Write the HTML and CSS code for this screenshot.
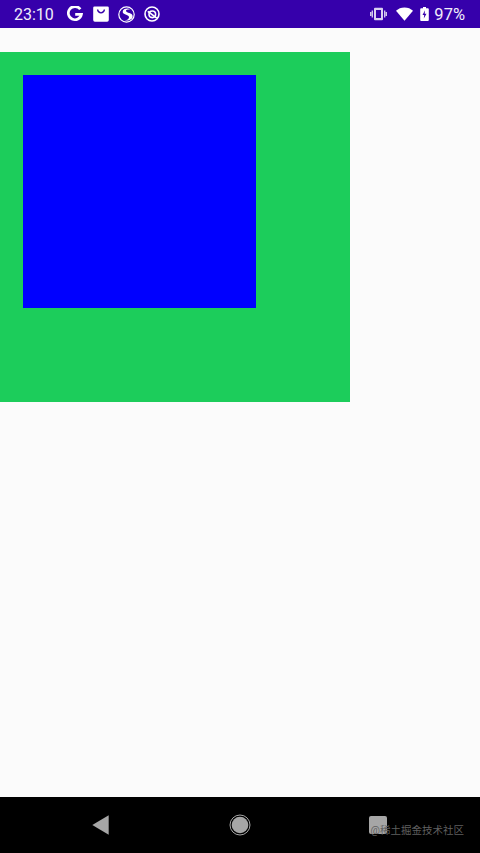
FILE: index.html
```html
<!DOCTYPE html>
<html lang="zh">
<head>
<meta charset="utf-8">
<title>Demo</title>
<link rel="stylesheet" href="styles.css">
</head>
<body>
<div class="screen">
  <header class="status">
    <div class="status-left">
      <span class="time">23:10</span>
      <div class="notifs">
        <svg class="ic ic-g" viewBox="0 0 16 16"><path d="M13.300 3.300A6.600 6.600 0 1 0 14.400 8.400H8.200" fill="none" stroke="#fff" stroke-width="2.700"/></svg>
        <svg class="ic" viewBox="0 0 16 16"><path d="M1.500 .500h13a1.300 1.300 0 0 1 1.300 1.300v12.200a1.700 1.700 0 0 1-1.700 1.700H1.900A1.700 1.700 0 0 1 .2 14V1.800A1.300 1.300 0 0 1 1.500 .500z" fill="#fff"/><path d="M4.500 3.500c.5 2.300 1.800 3.300 3.500 3.300s3-1 3.500-3.300" fill="none" stroke="#3600ab" stroke-width="1.200"/></svg>
        <svg class="ic ic-s" viewBox="0 0 17 17"><circle cx="8.500" cy="8.500" r="7.700" fill="none" stroke="#fff" stroke-width="1.200"/><path d="M12.500 3.200C9 1.800 4.800 3 4.700 5.800c-.1 3.200 5.700 2.600 6.300 5.100.3 1.500-1.300 3-4.500 3.500 4.300.8 8.300-.8 8.100-4.300-.2-3.500-6.200-2.800-6.500-5C7.500 3.900 10 3.200 12.500 3.200z" fill="#fff"/></svg>
        <svg class="ic" viewBox="0 0 16 16"><circle cx="8" cy="8" r="7" fill="none" stroke="#fff" stroke-width="1.600"/><circle cx="8.300" cy="8.300" r="3.300" fill="none" stroke="#fff" stroke-width="1.600"/><path d="M3.800 5.300l9 6.900" stroke="#fff" stroke-width="1.700"/></svg>
      </div>
    </div>
    <div class="status-right">
      <svg class="ic-vib" viewBox="0 0 17 14"><path d="M5 .800h7a1 1 0 0 1 1 1v10.400a1 1 0 0 1-1 1H5a1 1 0 0 1-1-1V1.800a1 1 0 0 1 1-1zM6 3v8h5V3z" fill="#d9d0f0" fill-rule="evenodd"/><path d="M2.300 3.500v7M.7 5v4M14.700 3.500v7M16.300 5v4" stroke="#d9d0f0" stroke-width="1.300"/></svg>
      <svg class="ic-wifi" viewBox="0 0 17 14"><path d="M0 3.700C2.200 1.600 5.200.4 8.500.4s6.300 1.200 8.500 3.300L8.500 13.800z" fill="#fff"/></svg>
      <svg class="ic-batt" viewBox="0 0 9 14"><path d="M3 0h3v1.200h1.800a1 1 0 0 1 1 1V13a1 1 0 0 1-1 1H1.200a1 1 0 0 1-1-1V2.200a1 1 0 0 1 1-1H3z" fill="#fff"/><path d="M5 3.300L2.500 8h1.700L3.800 11.500l2.700-4.700H4.700z" fill="#3600ab"/></svg>
      <span class="pct">97%</span>
    </div>
  </header>
  <main class="content">
    <div class="green">
      <div class="blue"></div>
    </div>
  </main>
  <footer class="nav">
    <svg class="nav-back" viewBox="0 0 17 20"><path d="M16.700 .300V19.700L.300 10z" fill="#a6a6a6"/></svg>
    <svg class="nav-home" viewBox="0 0 22 22"><circle cx="11" cy="11" r="10" fill="none" stroke="#a6a6a6" stroke-width="1"/><circle cx="11" cy="11" r="8.300" fill="#a6a6a6"/></svg>
    <span class="nav-recent"></span>
    <span class="watermark">@稀土掘金技术社区</span>
  </footer>
</div>
</body>
</html>
```
FILE: styles.css
```css
html, body {
  margin: 0;
  padding: 0;
}

.screen {
  width: 480px;
  height: 853px;
  display: flex;
  flex-direction: column;
  background: #fbfbfb;
  overflow: hidden;
  font-family: Roboto, "Noto Sans CJK SC", sans-serif;
}

.status {
  height: 28px;
  flex: none;
  box-sizing: border-box;
  padding: 0 15px 0 14px;
  display: flex;
  justify-content: space-between;
  align-items: center;
  background: #3600ab;
  color: #f1edfa;
  font-size: 16px;
}

.status-left,
.status-right,
.notifs {
  display: flex;
  align-items: center;
}

.notifs {
  gap: 9px;
  margin-left: 13px;
}

.ic {
  width: 16px;
  height: 16px;
  display: block;
}

.ic-g {
  margin-right: 1px;
}

.ic-s {
  width: 17px;
  height: 17px;
}

.ic-vib {
  width: 17px;
  height: 14px;
  margin-right: 9px;
}

.ic-wifi {
  width: 17px;
  height: 14px;
  margin-right: 7px;
}

.ic-batt {
  width: 9px;
  height: 14px;
  margin-right: 5px;
}

.pct {
  font-size: 16.500px;
}

.content {
  flex: 1;
  padding-top: 23.5px;
}

.green {
  width: 350px;
  height: 350px;
  box-sizing: border-box;
  padding: 23.500px 0 0 23px;
  background: #1ccd5b;
}

.blue {
  width: 233px;
  height: 233px;
  background: #0000ff;
}

.nav {
  height: 56px;
  flex: none;
  position: relative;
  display: flex;
  align-items: center;
  background: #000;
  padding-left: 92px;
}

.nav-back {
  width: 17px;
  height: 20px;
}

.nav-home {
  width: 22px;
  height: 22px;
  margin-left: 120px;
}

.nav-recent {
  width: 18px;
  height: 18px;
  margin-left: 118px;
  border-radius: 2px;
  background: #a6a6a6;
}

.watermark {
  position: absolute;
  right: 16px;
  top: 26px;
  font-size: 10.500px;
  line-height: 15px;
  color: #5f5f5f;
}
```
